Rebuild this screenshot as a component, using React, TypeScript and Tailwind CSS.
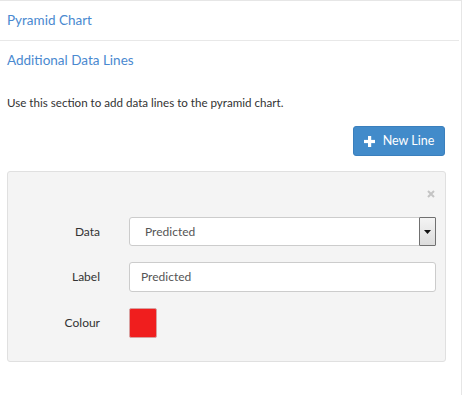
import React from "react";

export default function App() {
  const font = { fontFamily: "Lato, 'Open Sans', sans-serif" };
  return (
    <div className="w-[463px] h-[395px] bg-white" style={font}>
      <div className="w-[462px] h-[395px] border-t border-r border-[#e6e6e6]">
        <div className="h-[40px] mr-[2px] border-b border-[#e8e8e8] flex items-center px-[7px] text-[13.5px] text-[#4a89d0]">
          Pyramid Chart
        </div>
        <div className="h-[38px] flex items-center px-[7px] text-[13.5px] text-[#4a89d0]">
          Additional Data Lines
        </div>
        <div className="px-[7px] pt-[16px] text-[11.6px] text-[#333] leading-[16px]">
          Use this section to add data lines to the pyramid chart.
        </div>
        <div className="flex justify-end pr-[16px] pt-[15px]">
          <button className="w-[92px] h-[30px] rounded-[3px] bg-[#428bca] border border-[#3a7fbd] text-white text-[12.5px] flex items-center justify-center gap-[8px]">
            <svg width="11" height="11" viewBox="0 0 11 11">
              <rect x="4" y="0" width="3.2" height="11" fill="white" />
              <rect x="0" y="3.9" width="11" height="3.2" fill="white" />
            </svg>
            <span>New Line</span>
          </button>
        </div>
        <div className="ml-[7px] mt-[15px] w-[439px] h-[191px] bg-[#f4f4f4] border border-[#e0e0e0] rounded-[3px] relative">
          <svg className="absolute right-[10px] top-[18px]" width="8" height="8" viewBox="0 0 8 8">
            <path d="M1 1 L7 7 M7 1 L1 7" stroke="#c4c4c4" strokeWidth="2" />
          </svg>
          <div className="pt-[45px] flex flex-col gap-[16px]">
            <div className="flex items-center h-[29px]">
              <div className="w-[92px] text-right text-[12px] text-[#333]">Data</div>
              <div className="ml-[29px] w-[307px] h-[29px] bg-white border border-[#ccc] rounded-[3px] flex items-center justify-between">
                <span className="pl-[15px] text-[12px] text-[#555]">Predicted</span>
                <div className="w-[17px] h-[29px] -mr-px border border-[#707070] rounded-[1px] bg-gradient-to-b from-[#f4f4f4] to-[#dcdcdc] flex items-center justify-center">
                  <svg width="7" height="4" viewBox="0 0 7 4"><path d="M0 0 L7 0 L3.5 4 Z" fill="#111" /></svg>
                </div>
              </div>
            </div>
            <div className="flex items-center h-[30px]">
              <div className="w-[92px] text-right text-[12px] text-[#333]">Label</div>
              <div className="ml-[29px] w-[307px] h-[30px] bg-white border border-[#ccc] rounded-[3px] flex items-center pl-[11px] text-[12px] text-[#555]">
                Predicted
              </div>
            </div>
            <div className="flex items-center h-[30px]">
              <div className="w-[92px] text-right text-[12px] text-[#333]">Colour</div>
              <div className="ml-[29px] w-[28px] h-[30px] bg-[#f01e1e] border border-[#d8a0a0] rounded-[2px]" />
            </div>
          </div>
        </div>
      </div>
    </div>
  );
}
